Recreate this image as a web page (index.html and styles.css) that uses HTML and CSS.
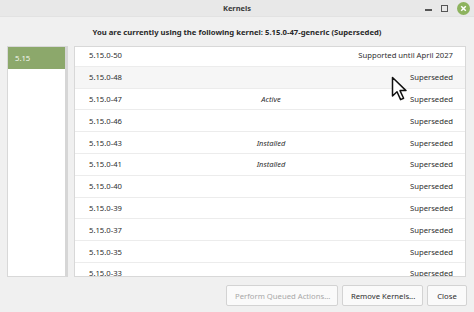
FILE: index.html
```html
<!DOCTYPE html>
<html>

<head>
    <title>Kernels</title>
    <meta charset="utf-8">
    <link rel="stylesheet" href="styles.css">
</head>

<body>
    <div class="vindue">
        <header class="titel">
            <span class="navn">Kernels</span>
            <div class="knapper">
                <span class="min"></span>
                <span class="max"></span>
                <span class="luk">
                    <svg width="13" height="13" viewBox="0 0 13 13">
                        <circle cx="6.5" cy="6.5" r="6.5" fill="#8db35e" />
                        <path d="M4.2 4.2 L8.8 8.8 M8.8 4.2 L4.2 8.8" stroke="#fff" stroke-width="1.5" />
                    </svg>
                </span>
            </div>
        </header>

        <p class="info">You are currently using the following kernel: 5.15.0-47-generic (Superseded)</p>

        <main class="indhold">
            <aside class="serier">
                <div class="serie valgt">5.15</div>
            </aside>

            <section class="liste">
                <div class="rul">
                    <div class="raekke"><span>5.15.0-50</span><em></em><span class="status">Supported until April 2027</span></div>
                    <div class="raekke hover"><span>5.15.0-48</span><em></em><span class="status">Superseded</span></div>
                    <div class="raekke"><span>5.15.0-47</span><em>Active</em><span class="status">Superseded</span></div>
                    <div class="raekke"><span>5.15.0-46</span><em></em><span class="status">Superseded</span></div>
                    <div class="raekke"><span>5.15.0-43</span><em>Installed</em><span class="status">Superseded</span></div>
                    <div class="raekke"><span>5.15.0-41</span><em>Installed</em><span class="status">Superseded</span></div>
                    <div class="raekke"><span>5.15.0-40</span><em></em><span class="status">Superseded</span></div>
                    <div class="raekke"><span>5.15.0-39</span><em></em><span class="status">Superseded</span></div>
                    <div class="raekke"><span>5.15.0-37</span><em></em><span class="status">Superseded</span></div>
                    <div class="raekke"><span>5.15.0-35</span><em></em><span class="status">Superseded</span></div>
                    <div class="raekke"><span>5.15.0-33</span><em></em><span class="status">Superseded</span></div>
                </div>
            </section>
        </main>

        <footer class="bund">
            <button class="knap slukket">Perform Queued Actions...</button>
            <button class="knap fjern">Remove Kernels...</button>
            <button class="knap luk-knap">Close</button>
        </footer>

        <svg class="mus" width="18" height="26" viewBox="0 0 18 26">
            <path d="M1.5 1.5 L1.5 20 L6 15.8 L9.6 23.6 L12.6 22.2 L9 14.6 L15 14.6 Z" fill="#fff" stroke="#111" stroke-width="1.5" stroke-linejoin="round" />
        </svg>
    </div>
</body>

</html>
```

FILE: styles.css
```css
* {
    box-sizing: border-box;
}

body {
    margin: 0;
    font-family: "Noto Sans", "DejaVu Sans", sans-serif;
    color: #333;
}

.vindue {
    position: relative;
    width: 474px;
    height: 312px;
    background-color: #f0f0f0;
    display: flex;
    flex-direction: column;
    overflow: hidden;
}

.titel {
    height: 17px;
    background-color: #e8e8e8;
    border-bottom: 1px solid #e2e2e2;
    display: flex;
    align-items: center;
    justify-content: center;
    position: relative;
}

.navn {
    font-size: 7.5px;
    font-weight: bold;
    color: #3a3a3a;
}

.knapper {
    position: absolute;
    right: 4px;
    top: 2px;
    display: flex;
    align-items: center;
    gap: 9px;
}

.min {
    width: 7px;
    height: 1.5px;
    background-color: #555;
    margin-top: 3px;
}

.max {
    width: 7px;
    height: 7px;
    border: 1.5px solid #555;
}

.luk svg {
    display: block;
}

.info {
    margin: 0;
    height: 29px;
    display: flex;
    align-items: center;
    justify-content: center;
    font-size: 7.7px;
    font-weight: bold;
    color: #2a2a2a;
}

.indhold {
    height: 231px;
    display: flex;
    gap: 6px;
    padding: 0 8px 0 7px;
}

.serier {
    width: 61px;
    background-color: #fff;
    border: 1px solid #d8d8d8;
    border-right: 3px solid #d6d6d6;
}

.serie {
    height: 22px;
    padding-left: 7px;
    display: flex;
    align-items: center;
    font-size: 7.7px;
}

.valgt {
    background-color: #8ca86b;
    color: #f3f7ee;
}

.liste {
    flex: 1;
    background-color: #fff;
    border: 1px solid #d8d8d8;
    overflow: hidden;
}

.rul {
    margin-top: -2px;
}

.raekke {
    height: 21.8px;
    display: grid;
    grid-template-columns: 1fr 1fr 1fr;
    align-items: center;
    padding: 0 12px 0 14px;
    border-bottom: 1px solid #ececec;
    font-size: 7.7px;
    color: #2e2e2e;
}

.raekke em {
    text-align: center;
    font-size: 7.5px;
}

.hover {
    background-color: #f6f6f6;
}

.status {
    text-align: right;
}

.bund {
    flex: 1;
    display: flex;
    justify-content: flex-end;
    align-items: flex-start;
    gap: 4px;
    padding: 8px 7px 0 0;
}

.knap {
    height: 21px;
    padding: 0 8px;
    font-family: "Noto Sans", "DejaVu Sans", sans-serif;
    font-size: 7.7px;
    white-space: nowrap;
    color: #2e2e2e;
    background-color: #fafafa;
    border: 1px solid #d3d3d3;
    border-radius: 2px;
}

.slukket {
    color: #a8a8a8;
    width: 112px;
}

.fjern {
    width: 81px;
}

.luk-knap {
    width: 40px;
}

.mus {
    position: absolute;
    left: 391px;
    top: 76px;
}
```
